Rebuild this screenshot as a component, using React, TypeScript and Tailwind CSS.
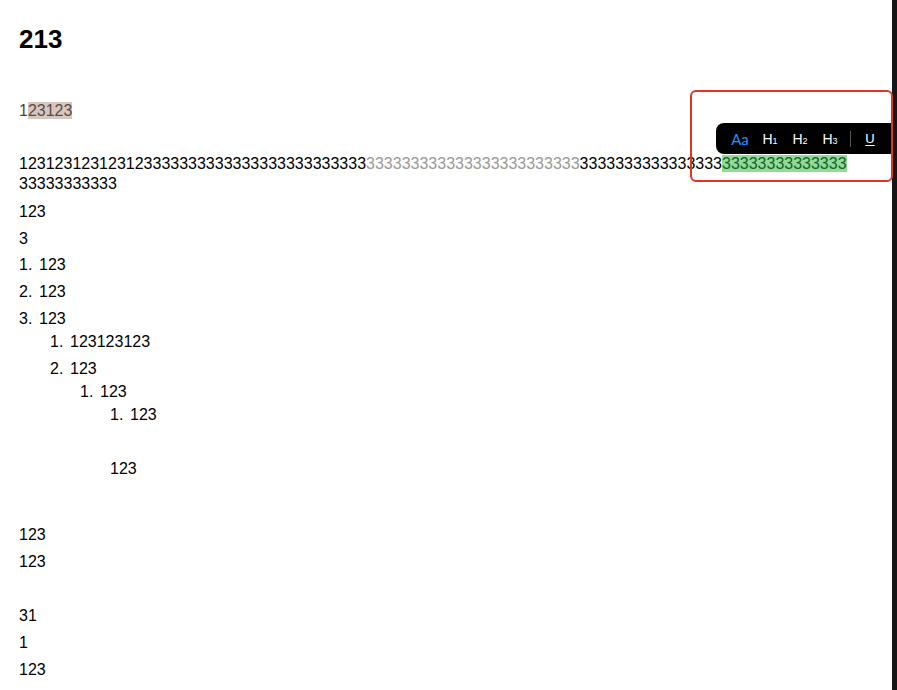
import React from "react";

// one numbered list row: marker column then content
const Item = ({ n, indent, className = "", children }: { n: string; indent: string; className?: string; children: React.ReactNode }) => (
  <div className={`flex ${indent} ${className}`}>
    <span className="w-[20px] shrink-0">{n}</span>
    <span>{children}</span>
  </div>
);

const Heading = ({ level }: { level: string }) => (
  <span className="flex w-[30px] items-end justify-center text-white">
    <span className="text-[14px] leading-[16px]">H</span>
    <span className="text-[9px] leading-[12px]">{level}</span>
  </span>
);

export default function App() {
  return (
    <div
      className="relative flex h-[690px] w-full overflow-hidden bg-white text-[16px] leading-[20px] text-black"
      style={{ fontFamily: '"Liberation Sans", Arial, sans-serif' }}
    >
      {/* Editor document */}
      <div className="flex min-w-0 flex-1 flex-col pl-[19px]">
        <h1 className="mt-[23px] text-[26px] font-bold leading-[32px]">213</h1>

        <p className="mt-[46px] text-[#4f413c]">
          1<span className="bg-[#d6c7c1] text-[#5c4a44]">23123</span>
        </p>

        <p className="mt-[33px] whitespace-nowrap">
          <span>123123123123123333333333333333333333333</span>
          <span className="text-[#999999]">333333333333333333333333</span>
          <span>3333333333333333</span>
          <span className="bg-[#8fdc97] text-[#1c5e2b]">33333333333333</span>
          <br />
          <span>33333333333</span>
        </p>

        <p className="mt-[8px]">123</p>
        <p className="mt-[7px]">3</p>

        <Item n="1." indent="" className="mt-[6px]">123</Item>
        <Item n="2." indent="" className="mt-[7px]">123</Item>
        <Item n="3." indent="" className="mt-[7px]">123</Item>
        <Item n="1." indent="pl-[31px]" className="mt-[3px]">123123123</Item>
        <Item n="2." indent="pl-[31px]" className="mt-[7px]">123</Item>
        <Item n="1." indent="pl-[61px]" className="mt-[3px]">123</Item>
        <Item n="1." indent="pl-[91px]" className="mt-[3px]">123</Item>

        <p className="mt-[34px] pl-[91px]">123</p>

        <p className="mt-[46px]">123</p>
        <p className="mt-[7px]">123</p>
        <p className="mt-[34px]">31</p>
        <p className="mt-[7px]">1</p>
        <p className="mt-[7px]">123</p>
      </div>

      {/* Dark edge on the right */}
      <div className="relative z-20 w-[5px] shrink-0 bg-[#161616]" />

      {/* Floating format toolbar */}
      <div className="absolute left-[716px] top-[123px] z-10 flex h-[31px] w-[200px] items-center rounded-[8px] bg-black pl-[9px]">
        <span
          className="flex w-[30px] justify-center text-[15px] leading-[18px] text-[#2196f3]"
          style={{ fontFamily: 'Lato, "Noto Sans", sans-serif' }}
        >
          Aa
        </span>
        <Heading level="1" />
        <Heading level="2" />
        <Heading level="3" />
        <span className="flex w-[10px] justify-center">
          <span className="h-[16px] w-px bg-[#555555]" />
        </span>
        <span className="flex w-[30px] justify-center text-[13px] leading-[16px] text-white underline underline-offset-2">
          U
        </span>
      </div>

      {/* Annotation frame */}
      <div className="pointer-events-none absolute left-[690px] top-[90px] z-30 h-[92px] w-[203px] rounded-[6px] border-2 border-[#e2341f]" />
    </div>
  );
}
